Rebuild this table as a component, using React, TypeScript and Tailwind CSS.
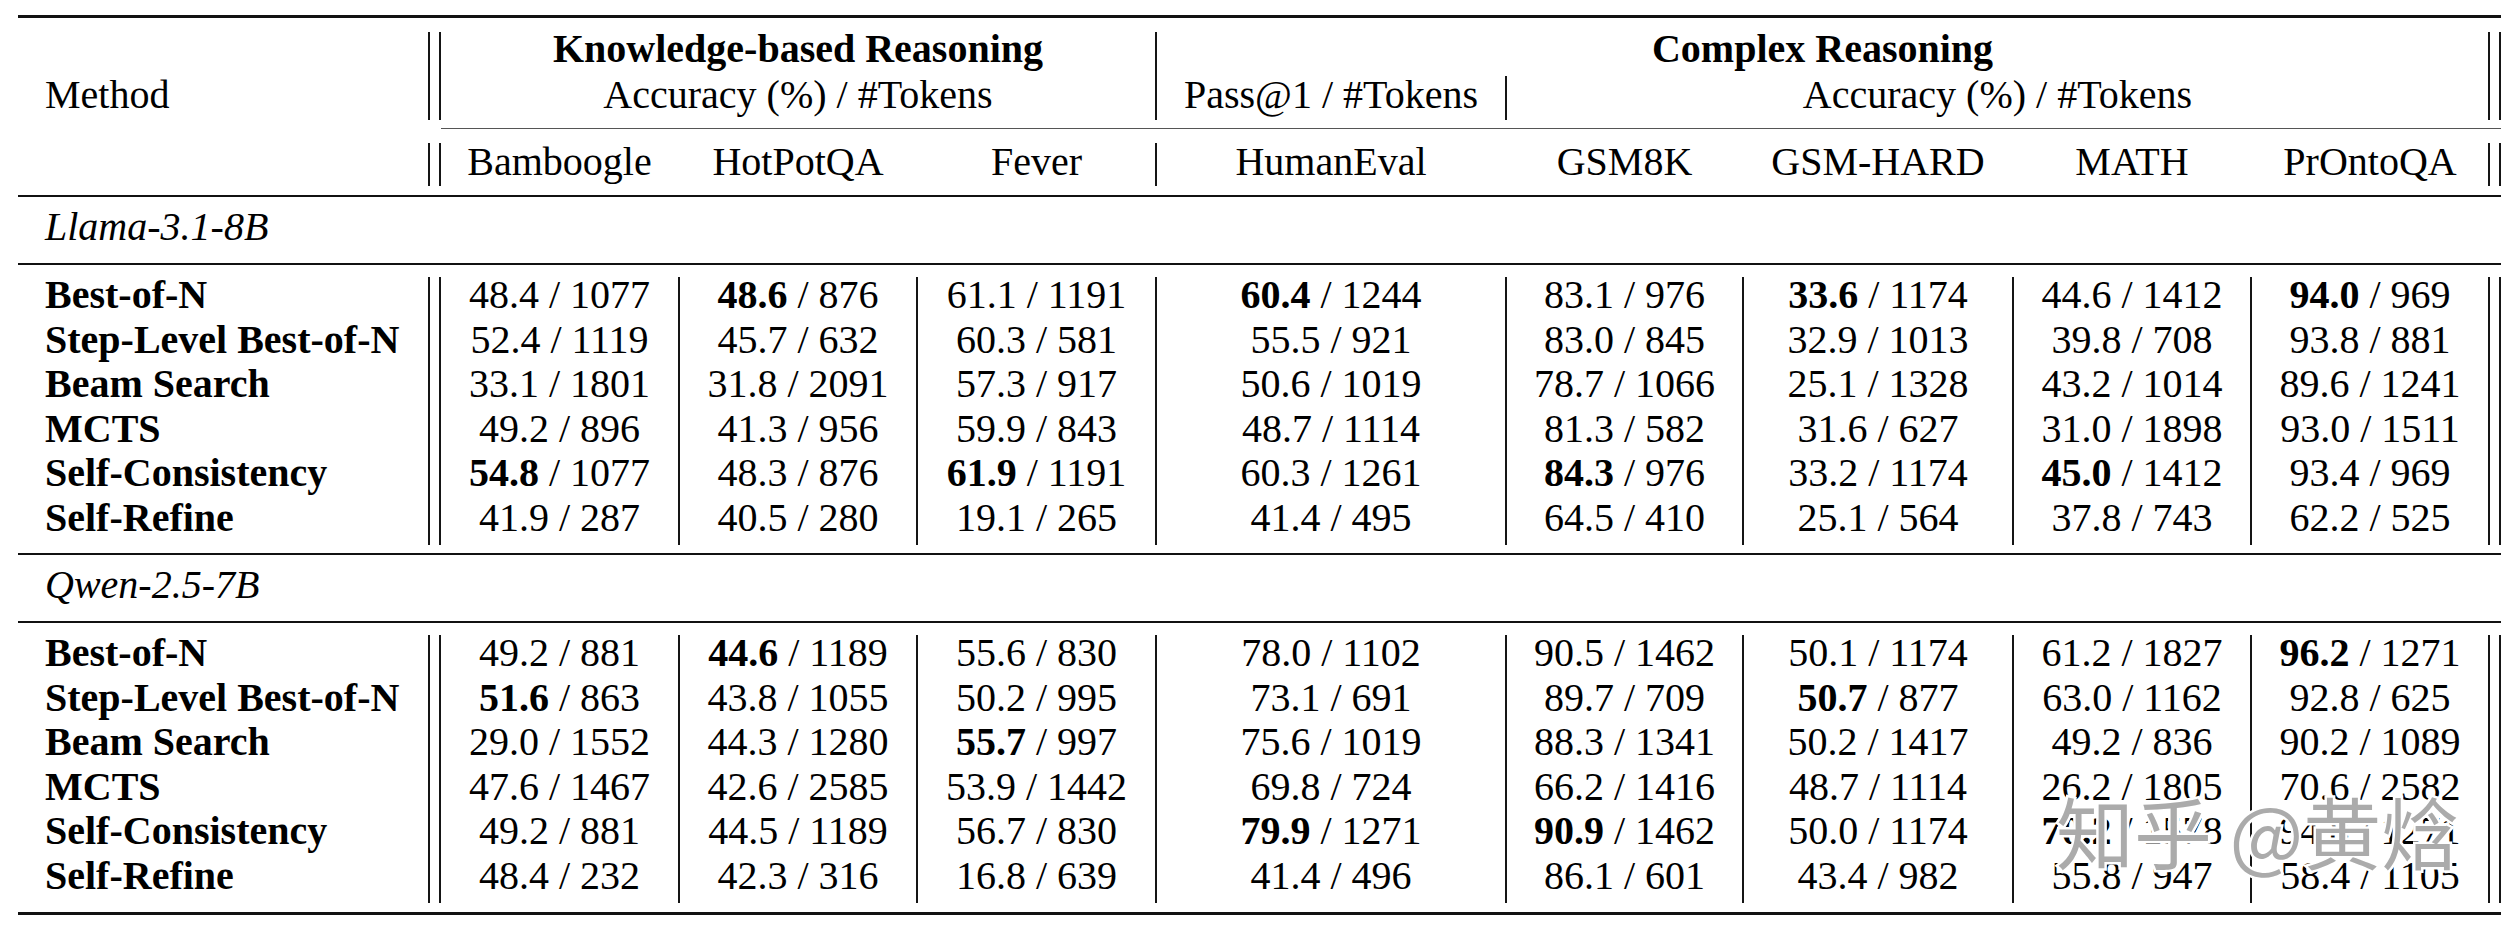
import React from "react";

type V = [string, string, boolean?];

const W = [
  "w-[237px]",
  "w-[238px]",
  "w-[239px]",
  "w-[350px]",
  "w-[237px]",
  "w-[270px]",
  "w-[238px]",
  "w-[238px]",
];

const llama: { name: string; vals: V[] }[] = [
  { name: "Best-of-N", vals: [["48.4", "1077"], ["48.6", "876", true], ["61.1", "1191"], ["60.4", "1244", true], ["83.1", "976"], ["33.6", "1174", true], ["44.6", "1412"], ["94.0", "969", true]] },
  { name: "Step-Level Best-of-N", vals: [["52.4", "1119"], ["45.7", "632"], ["60.3", "581"], ["55.5", "921"], ["83.0", "845"], ["32.9", "1013"], ["39.8", "708"], ["93.8", "881"]] },
  { name: "Beam Search", vals: [["33.1", "1801"], ["31.8", "2091"], ["57.3", "917"], ["50.6", "1019"], ["78.7", "1066"], ["25.1", "1328"], ["43.2", "1014"], ["89.6", "1241"]] },
  { name: "MCTS", vals: [["49.2", "896"], ["41.3", "956"], ["59.9", "843"], ["48.7", "1114"], ["81.3", "582"], ["31.6", "627"], ["31.0", "1898"], ["93.0", "1511"]] },
  { name: "Self-Consistency", vals: [["54.8", "1077", true], ["48.3", "876"], ["61.9", "1191", true], ["60.3", "1261"], ["84.3", "976", true], ["33.2", "1174"], ["45.0", "1412", true], ["93.4", "969"]] },
  { name: "Self-Refine", vals: [["41.9", "287"], ["40.5", "280"], ["19.1", "265"], ["41.4", "495"], ["64.5", "410"], ["25.1", "564"], ["37.8", "743"], ["62.2", "525"]] },
];

const qwen: { name: string; vals: V[] }[] = [
  { name: "Best-of-N", vals: [["49.2", "881"], ["44.6", "1189", true], ["55.6", "830"], ["78.0", "1102"], ["90.5", "1462"], ["50.1", "1174"], ["61.2", "1827"], ["96.2", "1271", true]] },
  { name: "Step-Level Best-of-N", vals: [["51.6", "863", true], ["43.8", "1055"], ["50.2", "995"], ["73.1", "691"], ["89.7", "709"], ["50.7", "877", true], ["63.0", "1162"], ["92.8", "625"]] },
  { name: "Beam Search", vals: [["29.0", "1552"], ["44.3", "1280"], ["55.7", "997", true], ["75.6", "1019"], ["88.3", "1341"], ["50.2", "1417"], ["49.2", "836"], ["90.2", "1089"]] },
  { name: "MCTS", vals: [["47.6", "1467"], ["42.6", "2585"], ["53.9", "1442"], ["69.8", "724"], ["66.2", "1416"], ["48.7", "1114"], ["26.2", "1805"], ["70.6", "2582"]] },
  { name: "Self-Consistency", vals: [["49.2", "881"], ["44.5", "1189"], ["56.7", "830"], ["79.9", "1271", true], ["90.9", "1462", true], ["50.0", "1174"], ["70.2", "1578", true], ["94.8", "1271"]] },
  { name: "Self-Refine", vals: [["48.4", "232"], ["42.3", "316"], ["16.8", "639"], ["41.4", "496"], ["86.1", "601"], ["43.4", "982"], ["55.8", "947"], ["58.4", "1105"]] },
];

function DoubleLine({ show = true }: { show?: boolean }) {
  return (
    <div
      className={
        show
          ? "w-[13px] shrink-0 border-x-2 border-[#151515]"
          : "w-[13px] shrink-0 border-x-2 border-transparent"
      }
    />
  );
}

function DataRow({ name, vals }: { name: string; vals: V[] }) {
  return (
    <div className="flex h-[44.6px]">
      <div className="w-[410px] shrink-0 pl-[27px] font-bold leading-[36px] whitespace-nowrap">
        {name}
      </div>
      <DoubleLine />
      {vals.map((v, i) => (
        <div
          key={i}
          className={
            W[i] +
            " shrink-0 text-center leading-[36px] whitespace-nowrap " +
            (i === 0 ? "" : "border-l-2 border-[#151515]")
          }
        >
          {v[2] ? <span className="font-bold">{v[0]}</span> : v[0]} / {v[1]}
        </div>
      ))}
      <DoubleLine />
    </div>
  );
}

function ModelRow({ name }: { name: string }) {
  return (
    <div className="h-[66px] pl-[27px] italic leading-[59px] whitespace-nowrap">
      {name}
    </div>
  );
}

function Group({ model, rows }: { model: string; rows: { name: string; vals: V[] }[] }) {
  return (
    <>
      <ModelRow name={model} />
      <div className="h-[2px] bg-[#111]" />
      <div className="h-[12px]" />
      {rows.map((r) => (
        <DataRow key={r.name} name={r.name} vals={r.vals} />
      ))}
    </>
  );
}

export default function App() {
  return (
    <div className="relative w-[2518px] h-[930px] overflow-hidden bg-white text-black font-['Liberation_Serif','Times_New_Roman',serif] text-[40px]">
      <div className="pl-[18px] pt-[15px]">
        <div className="w-[2483px]">
          {/* top rule */}
          <div className="h-[3px] bg-[#111]" />
          <div className="h-[14px]" />

          {/* header row 1 */}
          <div className="flex h-[44px]">
            <div className="w-[410px] shrink-0" />
            <DoubleLine />
            <div className="w-[714px] shrink-0 text-center font-bold leading-[33px] whitespace-nowrap">
              Knowledge-based Reasoning
            </div>
            <div className="w-[1333px] shrink-0 border-l-2 border-[#151515] text-center font-bold leading-[33px] whitespace-nowrap">
              Complex Reasoning
            </div>
            <DoubleLine />
          </div>

          {/* header row 2 */}
          <div className="flex h-[44px]">
            <div className="w-[410px] shrink-0 pl-[27px] leading-[37px]">Method</div>
            <DoubleLine />
            <div className="w-[714px] shrink-0 text-center leading-[37px] whitespace-nowrap">
              Accuracy (%) / #Tokens
            </div>
            <div className="w-[350px] shrink-0 border-l-2 border-[#151515] text-center leading-[37px] whitespace-nowrap">
              Pass@1 / #Tokens
            </div>
            <div className="w-[983px] shrink-0 border-l-2 border-[#151515] text-center leading-[37px] whitespace-nowrap">
              Accuracy (%) / #Tokens
            </div>
            <DoubleLine />
          </div>

          {/* cmidrule */}
          <div className="h-[7.5px]" />
          <div className="ml-[423px] h-[1.5px] bg-[#555]" />
          <div className="h-[14px]" />

          {/* header row 3 */}
          <div className="flex h-[43px]">
            <div className="w-[410px] shrink-0" />
            <DoubleLine />
            {["Bamboogle", "HotPotQA", "Fever", "HumanEval", "GSM8K", "GSM-HARD", "MATH", "PrOntoQA"].map(
              (t, i) => (
                <div
                  key={t}
                  className={
                    W[i] +
                    " shrink-0 text-center leading-[37px] whitespace-nowrap " +
                    (i === 0 ? "" : i === 3 ? "border-l-2 border-[#151515]" : "border-l-2 border-transparent")
                  }
                >
                  {t}
                </div>
              )
            )}
            <DoubleLine />
          </div>

          <div className="h-[9px]" />
          <div className="h-[2px] bg-[#111]" />

          <Group model="Llama-3.1-8B" rows={llama} />

          <div className="h-[8.4px]" />
          <div className="h-[2px] bg-[#111]" />

          <Group model="Qwen-2.5-7B" rows={qwen} />

          <div className="h-[9.4px]" />
          <div className="h-[3px] bg-[#111]" />
        </div>
      </div>

      {/* watermark */}
      <div className="absolute left-[2056px] top-[791px] whitespace-nowrap text-[78px] leading-none text-[#ababab] font-['Noto_Sans_CJK_SC',sans-serif] [-webkit-text-stroke:5px_white] [paint-order:stroke_fill]">
        知乎 @黄焓
      </div>
    </div>
  );
}
